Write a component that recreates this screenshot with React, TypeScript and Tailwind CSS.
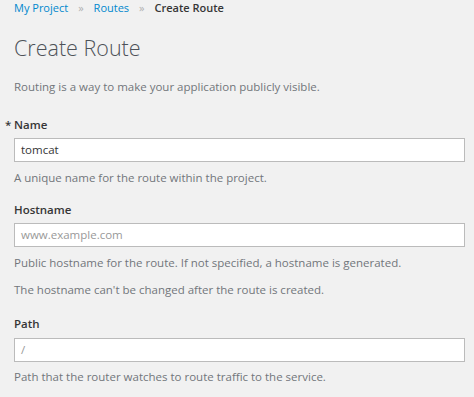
export default function App() {
  return (
    <div
      className="w-[474px] h-[397px] overflow-hidden bg-[#f1f1f1] px-[14px] text-[11.5px] text-[#363636]"
      style={{ fontFamily: '"Open Sans", "Noto Sans", sans-serif' }}
    >
      {/* Breadcrumb */}
      <div className="flex items-center h-[16px] leading-[16px] text-[11px]">
        <span className="text-[#0088ce]">My Project</span>
        <span className="mx-[10px] text-[#b0b0b0]">»</span>
        <span className="text-[#0088ce]">Routes</span>
        <span className="mx-[10px] text-[#b0b0b0]">»</span>
        <span className="font-semibold text-[#363636]">Create Route</span>
      </div>

      <h1 className="mt-[18px] text-[21.5px] leading-[28px] font-light text-[#4d5258]">Create Route</h1>

      <p className="mt-[17px] leading-[16px] text-[#72767b]">
        Routing is a way to make your application publicly visible.
      </p>

      {/* Name */}
      <label className="relative mt-[22px] block leading-[16px] font-semibold text-[#363636]">
        <span className="absolute -left-[9px] top-0">*</span>
        Name
      </label>
      <div className="mt-[5px] h-[24px] w-[451px] border border-[#bbbbbb] bg-white px-[6px] leading-[22px] text-[#363636]">
        tomcat
      </div>
      <p className="mt-[8px] leading-[16px] text-[#72767b]">A unique name for the route within the project.</p>

      {/* Hostname */}
      <label className="mt-[16px] block leading-[16px] font-semibold text-[#363636]">Hostname</label>
      <div className="mt-[5px] h-[24px] w-[451px] border border-[#bbbbbb] bg-white px-[6px] leading-[22px] text-[#999999]">
        www.example.com
      </div>
      <p className="mt-[8px] leading-[16px] text-[#72767b]">
        Public hostname for the route. If not specified, a hostname is generated.
      </p>
      <p className="mt-[11px] leading-[16px] text-[#72767b]">
        The hostname can't be changed after the route is created.
      </p>

      {/* Path */}
      <label className="mt-[18px] block leading-[16px] font-semibold text-[#363636]">Path</label>
      <div className="mt-[6px] h-[24px] w-[451px] border border-[#bbbbbb] bg-white px-[6px] leading-[22px] text-[#999999]">
        /
      </div>
      <p className="mt-[7px] leading-[16px] text-[#72767b]">
        Path that the router watches to route traffic to the service.
      </p>
    </div>
  );
}
